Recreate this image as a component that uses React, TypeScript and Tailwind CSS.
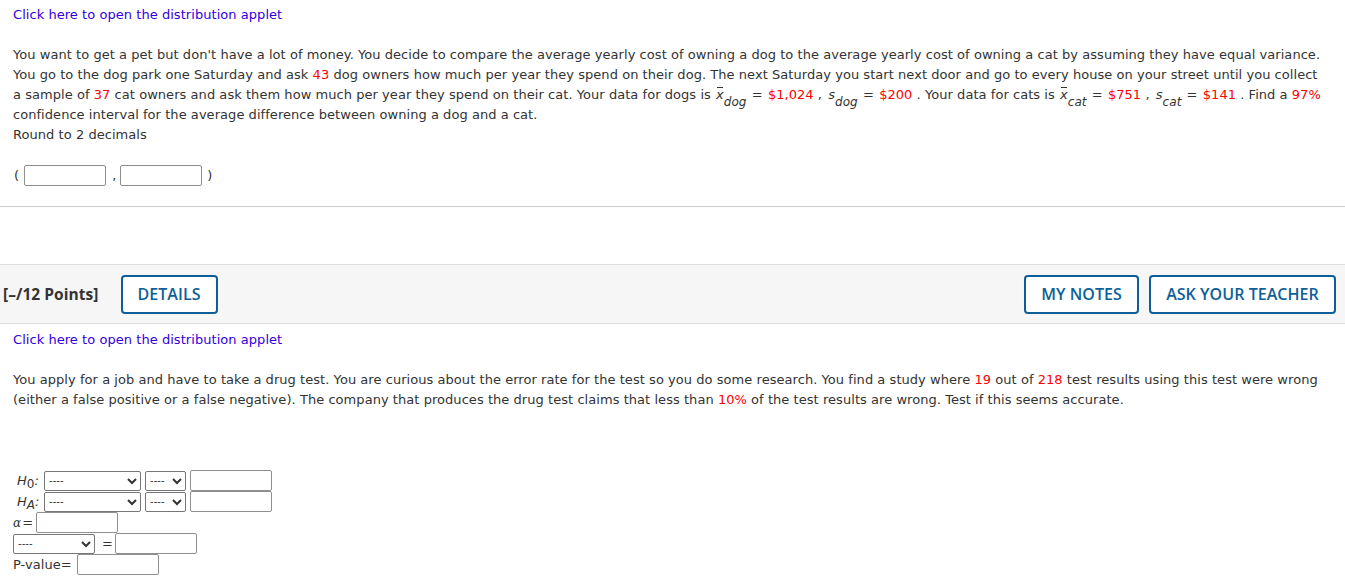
import React from 'react';

const Red = ({ children }: { children: React.ReactNode }) => (
  <span className="text-[#ff0000]">{children}</span>
);

const Xbar = ({ sub }: { sub: string }) => (
  <span className="italic ml-[1px]">
    <span className="relative inline-block">
      <span className="absolute left-[1px] right-[1px] top-[2px] h-px bg-[#333]" />
      x
    </span>
    <sub className="text-[12px] align-[-4px]">{sub}</sub>
  </span>
);

const S = ({ sub }: { sub: string }) => (
  <span className="italic ml-[2px]">
    s<sub className="text-[12px] align-[-4px]">{sub}</sub>
  </span>
);

const Eq = () => <span className="mx-[1px]">=</span>;

const TextBox = ({ w = 'w-[82px]' }: { w?: string }) => (
  <input
    type="text"
    className={`${w} h-[21px] border border-[#8f8f8f] rounded-[2px] bg-white align-middle`}
  />
);

const Select = ({ w }: { w: string }) => (
  <select
    className={`${w} h-[20px] border border-[#767676] rounded-[2px] bg-white text-[10px] text-[#333] align-middle`}
    defaultValue=""
  >
    <option value="">----</option>
  </select>
);

const OutlineButton = ({ children, className = '' }: { children: React.ReactNode; className?: string }) => (
  <button
    className={`h-[39px] border-2 border-[#0e5f99] rounded-[4px] bg-white text-[#0e5f99] text-[16px] font-semibold font-['Open_Sans',sans-serif] ${className}`}
  >
    {children}
  </button>
);

export default function App() {
  return (
    <div className="w-[1345px] bg-white text-[#333] text-[13px] leading-[20px] tracking-[0.05px] font-['DejaVu_Sans','Verdana',sans-serif]">
      {/* question 1 */}
      <div className="px-[13px] pt-[5px]">
        <a className="text-[#3300dd] cursor-pointer">Click here to open the distribution applet</a>
        <p className="mt-[20px] pr-[8px]">
          You want to get a pet but don't have a lot of money. You decide to compare the average yearly cost of owning a dog to the average yearly cost of owning a cat by assuming they have equal variance. You go to the dog park one Saturday and ask <Red>43</Red> dog owners how much per year they spend on their dog. The next Saturday you start next door and go to every house on your street until you collect a sample of <Red>37</Red> cat owners and ask them how much per year they spend on their cat. Your data for dogs is{' '}
          <Xbar sub="dog" /> <Eq /> <Red>$1,024</Red> , <S sub="dog" /> <Eq /> <Red>$200</Red> . Your data for cats is{' '}
          <Xbar sub="cat" /> <Eq /> <Red>$751</Red> , <S sub="cat" /> <Eq /> <Red>$141</Red> . Find a <Red>97%</Red> confidence interval for the average difference between owning a dog and a cat.
        </p>
        <p>Round to 2 decimals</p>
        <div className="mt-[20px] flex items-center pl-[1px] pb-[20px]">
          <span>(</span>
          <span className="ml-[5px]"><TextBox /></span>
          <span className="ml-[6px]">,</span>
          <span className="ml-[4px]"><TextBox /></span>
          <span className="ml-[5px]">)</span>
        </div>
      </div>
      <div className="border-t border-[#cccccc]" />

      {/* question 2 header */}
      <div className="mt-[57px] h-[60px] bg-[#f6f6f6] border-y border-[#dddddd] flex items-center pl-[3px] pr-[9px]">
        <span className="font-['Open_Sans',sans-serif] font-bold text-[15.5px] text-[#333]">[–/12 Points]</span>
        <OutlineButton className="ml-[22px] w-[97px]">DETAILS</OutlineButton>
        <div className="ml-auto flex gap-[10px]">
          <OutlineButton className="w-[115px]">MY NOTES</OutlineButton>
          <OutlineButton className="w-[187px]">ASK YOUR TEACHER</OutlineButton>
        </div>
      </div>

      {/* question 2 body */}
      <div className="px-[13px] pt-[6px]">
        <a className="text-[#3300dd] cursor-pointer">Click here to open the distribution applet</a>
        <p className="mt-[20px] pr-[4px]">
          You apply for a job and have to take a drug test. You are curious about the error rate for the test so you do some research. You find a study where <Red>19</Red> out of <Red>218</Red> test results using this test were wrong (either a false positive or a false negative). The company that produces the drug test claims that less than <Red>10%</Red> of the test results are wrong. Test if this seems accurate.
        </p>

        <div className="mt-[60px] flex flex-col pb-[10px]">
          <div className="flex items-center h-[21px]">
            <span className="w-[31px] pl-[4px] italic">H<sub className="not-italic text-[12px]">0</sub>:</span>
            <Select w="w-[97px]" />
            <span className="ml-[4px]"><Select w="w-[41px]" /></span>
            <span className="ml-[4px]"><TextBox /></span>
          </div>
          <div className="flex items-center h-[21px]">
            <span className="w-[31px] pl-[4px] italic">H<sub className="text-[12px]">A</sub>:</span>
            <Select w="w-[97px]" />
            <span className="ml-[4px]"><Select w="w-[41px]" /></span>
            <span className="ml-[4px]"><TextBox /></span>
          </div>
          <div className="flex items-center h-[21px]">
            <span className="font-['DejaVu_Serif',serif] italic text-[12px]">α</span>
            <span className="ml-[1px]">=</span>
            <span className="ml-[3px]"><TextBox /></span>
          </div>
          <div className="flex items-center h-[21px]">
            <Select w="w-[82px]" />
            <span className="ml-[7px]">=</span>
            <span className="ml-[2px]"><TextBox /></span>
          </div>
          <div className="flex items-center h-[21px]">
            <span>P-value=</span>
            <span className="ml-[5px]"><TextBox /></span>
          </div>
        </div>
      </div>
    </div>
  );
}
